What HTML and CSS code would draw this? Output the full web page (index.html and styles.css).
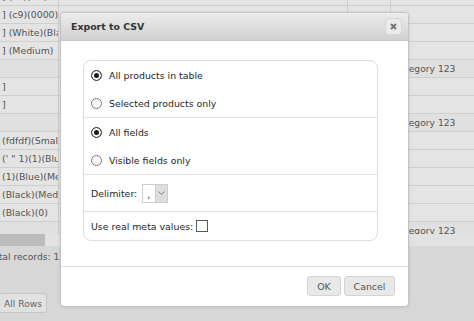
FILE: index.html
```html
<!DOCTYPE html>
<html>
<head>
<meta charset="utf-8">
<link rel="stylesheet" href="styles.css">
</head>
<body>
<div class="page">
  <div class="gridview">
    <div class="grid">
      <div class="row"><div class="c1">] (c9)(ffff)</div><div class="c2"></div><div class="c3"></div><div class="c4"></div></div>
      <div class="row"><div class="c1">] (c9)(0000)</div><div class="c2"></div><div class="c3"></div><div class="c4"></div></div>
      <div class="row"><div class="c1">] (White)(Black)</div><div class="c2"></div><div class="c3"></div><div class="c4"></div></div>
      <div class="row"><div class="c1">] (Medium)</div><div class="c2"></div><div class="c3"></div><div class="c4"></div></div>
      <div class="row group"><div class="c1"></div><div class="c2"></div><div class="c3"></div><div class="c4">Category 123</div></div>
      <div class="row"><div class="c1">]</div><div class="c2"></div><div class="c3"></div><div class="c4"></div></div>
      <div class="row"><div class="c1">]</div><div class="c2"></div><div class="c3"></div><div class="c4"></div></div>
      <div class="row group"><div class="c1"></div><div class="c2"></div><div class="c3"></div><div class="c4">Category 123</div></div>
      <div class="row"><div class="c1">(fdfdf)(Small)</div><div class="c2"></div><div class="c3"></div><div class="c4"></div></div>
      <div class="row"><div class="c1">(' " 1)(1)(Blue)</div><div class="c2"></div><div class="c3"></div><div class="c4"></div></div>
      <div class="row"><div class="c1">(1)(Blue)(Medium)</div><div class="c2"></div><div class="c3"></div><div class="c4"></div></div>
      <div class="row"><div class="c1">(Black)(Medium)</div><div class="c2"></div><div class="c3"></div><div class="c4"></div></div>
      <div class="row"><div class="c1">(Black)(0)</div><div class="c2"></div><div class="c3"></div><div class="c4"></div></div>
      <div class="row group"><div class="c1"></div><div class="c2"></div><div class="c3"></div><div class="c4">Category 123</div></div>
    </div>
  </div>
  <div class="hscroll"><div class="thumb"></div></div>
  <div class="footer">
    <div class="records">Total records: 13</div>
    <button class="allrows">All Rows</button>
  </div>
</div>

<div class="dialog">
  <div class="titlebar">
    <span class="title">Export to CSV</span>
    <button class="close"><svg width="7" height="7" viewBox="0 0 7 7"><path d="M1 1 L6 6 M6 1 L1 6" stroke="#707070" stroke-width="1.8" fill="none"/></svg></button>
  </div>
  <div class="content">
    <div class="panel">
      <div class="section">
        <label class="opt"><span class="radio checked"></span>All products in table</label>
        <label class="opt"><span class="radio"></span>Selected products only</label>
      </div>
      <div class="section">
        <label class="opt"><span class="radio checked"></span>All fields</label>
        <label class="opt"><span class="radio"></span>Visible fields only</label>
      </div>
      <div class="section delim">
        <span>Delimiter:</span>
        <span class="select"><span class="val">,</span><span class="arrow"><svg width="7" height="4" viewBox="0 0 7 4"><path d="M0.5 0.5 L3.5 3.5 L6.5 0.5" stroke="#808080" fill="none"/></svg></span></span>
      </div>
      <div class="section meta">
        <span>Use real meta values:</span>
        <span class="check"></span>
      </div>
    </div>
  </div>
  <div class="buttons">
    <button class="btn ok">OK</button>
    <button class="btn cancel">Cancel</button>
  </div>
</div>
</body>
</html>
```

FILE: styles.css
```css
* { box-sizing: border-box; }

body {
  margin: 0;
  width: 474px;
  height: 321px;
  overflow: hidden;
  position: relative;
  background: #d7d7d7;
  font-family: "DejaVu Sans", sans-serif;
}

.page {
  display: flex;
  flex-direction: column;
  height: 321px;
}

.gridview {
  height: 234px;
  overflow: hidden;
  background: #e4e4e4;
  flex: none;
}

.grid {
  margin-top: -12px;
}

.row {
  display: flex;
  height: 18px;
  border-bottom: 1px solid #cecece;
  font-size: 9px;
  line-height: 17px;
  color: #555;
}

.row.group {
  background: #e0e0e0;
}

.c1, .c2, .c3, .c4 {
  white-space: nowrap;
  overflow: hidden;
}

.c1 {
  width: 59px;
  padding-left: 2px;
  border-right: 1px solid #cecece;
  font-size: 9.4px;
}

.c2 {
  width: 289px;
  border-right: 1px solid #cecece;
}

.c3 {
  width: 43px;
  border-right: 1px solid #cecece;
}

.c4 {
  flex: 1;
  padding-left: 2px;
  font-size: 9.2px;
}

.hscroll {
  height: 12px;
  flex: none;
  background: #e2e2e2;
}

.thumb {
  width: 45px;
  height: 100%;
  background: #bcbcbc;
}

.footer {
  display: flex;
  flex-direction: column;
  align-items: flex-start;
}

.records {
  margin-top: 5px;
  margin-left: -11px;
  font-size: 9.2px;
  line-height: 12px;
  color: #555;
  white-space: nowrap;
}

.allrows {
  margin-top: 30px;
  margin-left: -1px;
  width: 48px;
  height: 20px;
  padding: 0;
  border: 1px solid #c6c6c6;
  border-radius: 2px;
  background: #e1e1e1;
  font-family: "DejaVu Sans", sans-serif;
  font-size: 9.2px;
  color: #666;
}

/* dialog */
.dialog {
  position: absolute;
  left: 60px;
  top: 12px;
  width: 349px;
  height: 295px;
  border: 1px solid #c4c4c4;
  border-radius: 4px;
  background: #fff;
  display: flex;
  flex-direction: column;
  font-size: 9.4px;
  color: #262626;
  box-shadow: 0 0 3px rgba(0, 0, 0, 0.12);
}

.titlebar {
  flex: none;
  height: 28px;
  display: flex;
  align-items: center;
  justify-content: space-between;
  padding: 0 6px 0 10px;
  background: linear-gradient(#ededed, #d0d0d0);
  border-bottom: 1px solid #c8c8c8;
  border-radius: 3px 3px 0 0;
}

.title {
  font-weight: bold;
  color: #333;
}

.close {
  width: 17px;
  height: 17px;
  padding: 0;
  border: 1px solid #d6d6d6;
  border-radius: 3px;
  background: #ebebeb;
  display: flex;
  align-items: center;
  justify-content: center;
}

.content {
  flex: 1;
  padding: 19px 0 0 22px;
}

.panel {
  width: 295px;
  border: 1px solid #dddddd;
  border-radius: 8px;
}

.section {
  padding-left: 7px;
  border-bottom: 1px solid #e2e2e2;
}

.section:last-child {
  border-bottom: none;
}

.opt {
  display: flex;
  align-items: center;
  gap: 7px;
  height: 28px;
}

.radio {
  width: 11px;
  height: 11px;
  border-radius: 50%;
  border: 1px solid #7c7c7c;
  background: #fafafa;
  flex: none;
}

.radio.checked {
  border-color: #444;
  background: #1a1a1a;
  box-shadow: inset 0 0 0 2px #fff;
}

.delim {
  display: flex;
  align-items: center;
  gap: 5px;
  height: 37px;
}

.select {
  display: flex;
  height: 19px;
  border: 1px solid #cdcdcd;
}

.val {
  width: 12px;
  padding-left: 4px;
  line-height: 19px;
  color: #333;
}

.arrow {
  width: 12px;
  background: #dedede;
  border-left: 1px solid #cdcdcd;
  display: flex;
  align-items: center;
  justify-content: center;
}

.meta {
  display: flex;
  align-items: center;
  gap: 3px;
  height: 28px;
}

.check {
  width: 12px;
  height: 12px;
  border: 1px solid #5a5a5a;
  background: #fff;
}

.buttons {
  flex: none;
  height: 40px;
  border-top: 1px solid #dedede;
  display: flex;
  justify-content: flex-end;
  align-items: flex-start;
  gap: 3px;
  padding: 9px 13px 0 0;
}

.btn {
  height: 20px;
  padding: 0;
  border: 1px solid #d4d4d4;
  border-radius: 3px;
  background: #e8e8e8;
  font-family: "DejaVu Sans", sans-serif;
  font-size: 9.4px;
  color: #555;
}

.ok { width: 34px; }
.cancel { width: 51px; }
```
